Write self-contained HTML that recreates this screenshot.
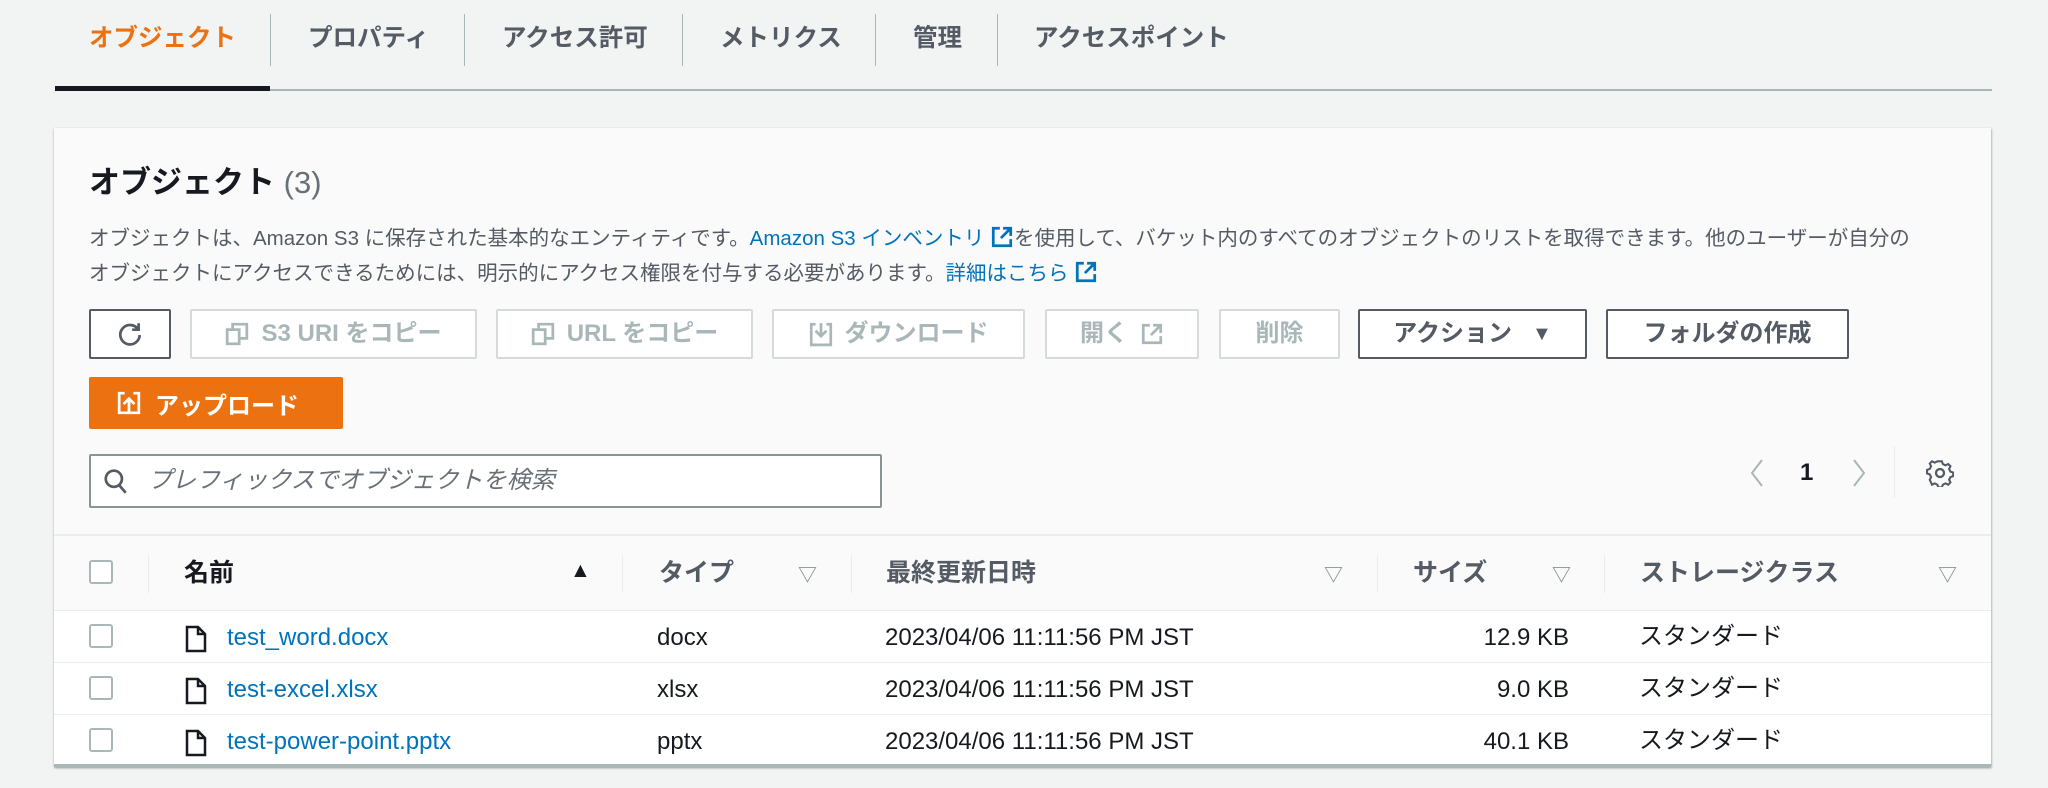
<!DOCTYPE html>
<html><head><meta charset="utf-8"><style>
*{box-sizing:border-box;margin:0;padding:0}
body{width:2048px;height:788px;background:#f2f3f3;font-family:"Liberation Sans","Noto Sans CJK JP",sans-serif;color:#16191f;position:relative;overflow:hidden}
.a{position:absolute;white-space:nowrap}
.tab{position:absolute;top:22px;font-size:24.5px;font-weight:bold;color:#545b64;line-height:34px}
.tsep{position:absolute;top:14px;width:1px;height:52px;background:#aab7b8}
.panel{position:absolute;left:54px;top:128px;width:1937px;height:639px;background:#fafafa;box-shadow:0 1px 2px rgba(0,28,36,.3),1px 1px 2px rgba(0,28,36,.15)}
.btn{position:absolute;top:309px;height:50px;border:2px solid #d5dbdb;border-radius:2px;background:#fff;color:#aab7b8;font-size:24px;font-weight:bold;display:flex;align-items:center;justify-content:center;gap:12px;line-height:30px}
.btn.on{border-color:#545b64;color:#545b64}
.hd{position:absolute;top:558px;font-size:25px;font-weight:bold;color:#545b64;line-height:30px}
.hsep{position:absolute;top:555px;width:1px;height:38px;background:#eaeded}
.tri{position:absolute;top:560px;font-size:19px;color:#879596;font-weight:bold}
.row{position:absolute;left:54px;width:1937px;height:52px;background:#fff;border-top:1px solid #eaeded}
.cb{position:absolute;left:89px;width:24px;height:24px;border:2px solid #aab7b8;border-radius:3px;background:#fff}
.cell{position:absolute;font-size:24px;color:#16191f;line-height:30px}
.lnk{color:#0073bb}
</style></head><body>
<div class="tab" style="left:89px;color:#ec7211">オブジェクト</div>
<div class="tsep" style="left:270px"></div>
<div class="tab" style="left:308px">プロパティ</div>
<div class="tsep" style="left:464px"></div>
<div class="tab" style="left:502px">アクセス許可</div>
<div class="tsep" style="left:682px"></div>
<div class="tab" style="left:720px">メトリクス</div>
<div class="tsep" style="left:875px"></div>
<div class="tab" style="left:913px">管理</div>
<div class="tsep" style="left:997px"></div>
<div class="tab" style="left:1034px">アクセスポイント</div>
<div class="a" style="left:55px;top:89px;width:1937px;height:2px;background:#aab7b8"></div>
<div class="a" style="left:55px;top:86px;width:215px;height:5px;background:#16191f"></div>

<div class="panel"></div>
<div class="a" style="left:89px;top:163px;font-size:31px;font-weight:bold;line-height:40px">オブジェクト <span style="font-weight:normal;color:#687078">(3)</span></div>
<div class="a" style="left:89px;top:225px;font-size:20.5px;color:#545b64;line-height:28px">オブジェクトは、Amazon S3 に保存された基本的なエンティティです。<span class="lnk">Amazon S3 インベントリ <svg width="24" height="24" viewBox="0 0 22 22" style="vertical-align:-4px"><path d="M9 3H3v16h16v-6M12 3h7v7M19 3l-9 9" fill="none" stroke="#0073bb" stroke-width="2.5"/></svg></span>を使用して、バケット内のすべてのオブジェクトのリストを取得できます。他のユーザーが自分の</div>
<div class="a" style="left:89px;top:260px;font-size:20.5px;color:#545b64;line-height:28px">オブジェクトにアクセスできるためには、明示的にアクセス権限を付与する必要があります。<span class="lnk">詳細はこちら <svg width="24" height="24" viewBox="0 0 22 22" style="vertical-align:-4px"><path d="M9 3H3v16h16v-6M12 3h7v7M19 3l-9 9" fill="none" stroke="#0073bb" stroke-width="2.5"/></svg></span></div>

<div class="btn on" style="left:89px;width:82px"><svg width="28" height="28" viewBox="0 0 26 26"><path d="M20 8A9 9 0 1 0 22 14" fill="none" stroke="#545b64" stroke-width="2.5"/><path d="M21 3v6h-6" fill="none" stroke="#545b64" stroke-width="2.5"/></svg></div>
<div class="btn" style="left:190px;width:287px"><svg width="24" height="24" viewBox="0 0 22 22"><rect x="2" y="7" width="11" height="13" fill="none" stroke="#aab7b8" stroke-width="2.5"/><path d="M7 7V2h13v13h-7" fill="none" stroke="#aab7b8" stroke-width="2.5"/></svg>S3 URI をコピー</div>
<div class="btn" style="left:496px;width:257px"><svg width="24" height="24" viewBox="0 0 22 22"><rect x="2" y="7" width="11" height="13" fill="none" stroke="#aab7b8" stroke-width="2.5"/><path d="M7 7V2h13v13h-7" fill="none" stroke="#aab7b8" stroke-width="2.5"/></svg>URL をコピー</div>
<div class="btn" style="left:772px;width:253px"><svg width="24" height="26" viewBox="0 0 22 24"><path d="M6 3H2v19h18V3h-4M11 2v12M6 9l5 5 5-5" fill="none" stroke="#aab7b8" stroke-width="2.5"/></svg>ダウンロード</div>
<div class="btn" style="left:1045px;width:154px">開く <svg width="24" height="24" viewBox="0 0 22 22"><path d="M9 3H3v16h16v-6M12 3h7v7M19 3l-9 9" fill="none" stroke="#aab7b8" stroke-width="2.5"/></svg></div>
<div class="btn" style="left:1219px;width:121px">削除</div>
<div class="btn on" style="left:1358px;width:229px;gap:20px">アクション <span style="font-size:20px">▼</span></div>
<div class="btn on" style="left:1606px;width:243px">フォルダの作成</div>

<div class="a" style="left:89px;top:377px;width:254px;height:52px;background:#ec7211;border-radius:2px;color:#fff;font-size:24px;font-weight:bold;display:flex;align-items:center;padding-left:28px;gap:14px"><svg width="24" height="24" viewBox="0 0 22 22"><path d="M7 2H2v18h18V2h-5M11 20V7M6 12l5-5 5 5" fill="none" stroke="#fff" stroke-width="2.5"/></svg>アップロード</div>

<div class="a" style="left:89px;top:454px;width:793px;height:54px;background:#fff;border:2px solid #879596;border-radius:2px"></div>
<svg class="a" style="left:103px;top:468px" width="26" height="28" viewBox="0 0 24 26"><circle cx="10" cy="10" r="7.5" fill="none" stroke="#545b64" stroke-width="2.5"/><path d="M15 16l6 7" stroke="#545b64" stroke-width="2.5"/></svg>
<div class="a" style="left:148px;top:466px;font-size:24px;font-style:italic;color:#687078;line-height:30px">プレフィックスでオブジェクトを検索</div>

<svg class="a" style="left:1747px;top:458px" width="20" height="30" viewBox="0 0 20 30"><path d="M15 2L5 15l10 13" fill="none" stroke="#aab7b8" stroke-width="2"/></svg>
<div class="a" style="left:1800px;top:459px;font-size:24px;font-weight:bold">1</div>
<svg class="a" style="left:1849px;top:458px" width="20" height="30" viewBox="0 0 20 30"><path d="M5 2l10 13L5 28" fill="none" stroke="#aab7b8" stroke-width="2"/></svg>
<div class="a" style="left:1894px;top:446px;width:1px;height:52px;background:#eaeded"></div>
<svg class="a" style="left:1926px;top:459px" width="28" height="28" viewBox="0 0 28 28"><path d="M12 2h4l1 3 3 1.5 3-1.5 2.5 2.5-1.5 3 1.5 3 3 1v4l-3 1-1.5 3 1.5 3-2.5 2.5-3-1.5-3 1.5-1 3h-4l-1-3-3-1.5-3 1.5L2.5 22.5l1.5-3L2.5 16.5-.5 15.5v-4l3-1L4 7.5 2.5 4.5 5 2l3 1.5L11 2z" fill="none" stroke="#545b64" stroke-width="2.3" transform="translate(1.5 0.5) scale(0.9)"/><circle cx="14" cy="14" r="4" fill="none" stroke="#545b64" stroke-width="2.3"/></svg>

<div class="a" style="left:54px;top:534px;width:1937px;height:2px;background:#eaeded"></div>
<div class="cb" style="top:560px"></div>
<div class="hsep" style="left:148px"></div>
<div class="hd" style="left:184px;color:#16191f">名前</div>
<div class="a" style="left:570px;top:559px;font-size:21px">▲</div>
<div class="hsep" style="left:622px"></div>
<div class="hd" style="left:659px">タイプ</div>
<div class="tri" style="left:798px">▽</div>
<div class="hsep" style="left:851px"></div>
<div class="hd" style="left:886px">最終更新日時</div>
<div class="tri" style="left:1324px">▽</div>
<div class="hsep" style="left:1377px"></div>
<div class="hd" style="left:1413px">サイズ</div>
<div class="tri" style="left:1552px">▽</div>
<div class="hsep" style="left:1604px"></div>
<div class="hd" style="left:1640px">ストレージクラス</div>
<div class="tri" style="left:1938px">▽</div>

<div class="row" style="top:610px"></div>
<div class="row" style="top:662px"></div>
<div class="row" style="top:714px;height:53px;border-bottom:3px solid #aab7b8"></div>

<div class="cb" style="top:624px"></div>
<div class="cb" style="top:676px"></div>
<div class="cb" style="top:728px"></div>

<svg class="a" style="left:185px;top:625px" width="22" height="28" viewBox="0 0 22 28"><path d="M2 2h11l7 7v17H2z M13 2v7h7" fill="none" stroke="#16191f" stroke-width="2.5"/></svg>
<svg class="a" style="left:185px;top:677px" width="22" height="28" viewBox="0 0 22 28"><path d="M2 2h11l7 7v17H2z M13 2v7h7" fill="none" stroke="#16191f" stroke-width="2.5"/></svg>
<svg class="a" style="left:185px;top:729px" width="22" height="28" viewBox="0 0 22 28"><path d="M2 2h11l7 7v17H2z M13 2v7h7" fill="none" stroke="#16191f" stroke-width="2.5"/></svg>

<div class="cell lnk" style="left:227px;top:623px">test_word.docx</div>
<div class="cell lnk" style="left:227px;top:675px">test-excel.xlsx</div>
<div class="cell lnk" style="left:227px;top:727px">test-power-point.pptx</div>
<div class="cell" style="left:657px;top:623px">docx</div>
<div class="cell" style="left:657px;top:675px">xlsx</div>
<div class="cell" style="left:657px;top:727px">pptx</div>
<div class="cell" style="left:885px;top:623px">2023/04/06 11:11:56 PM JST</div>
<div class="cell" style="left:885px;top:675px">2023/04/06 11:11:56 PM JST</div>
<div class="cell" style="left:885px;top:727px">2023/04/06 11:11:56 PM JST</div>
<div class="cell" style="right:479px;top:623px">12.9 KB</div>
<div class="cell" style="right:479px;top:675px">9.0 KB</div>
<div class="cell" style="right:479px;top:727px">40.1 KB</div>
<div class="cell" style="left:1639px;top:622px">スタンダード</div>
<div class="cell" style="left:1639px;top:674px">スタンダード</div>
<div class="cell" style="left:1639px;top:726px">スタンダード</div>
</body></html>
